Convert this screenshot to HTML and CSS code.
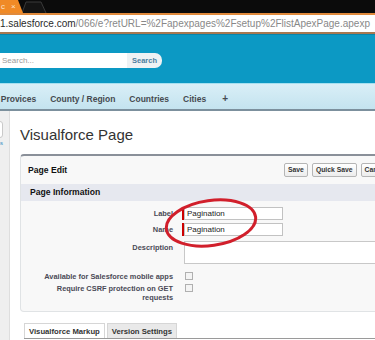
FILE: index.html
```html
<!DOCTYPE html>
<html>
<head>
<meta charset="utf-8">
<link rel="stylesheet" href="styles.css">
</head>
<body>
<div class="page">
  <div class="tabstrip">
    <div class="tab-active"><span class="tab-title">c</span><span class="tab-x">×</span></div>
    <svg class="tab-new" width="26" height="13" viewBox="0 0 26 13"><path d="M1 13 L5 2 H20 L25 13" fill="#141414" stroke="#3a3a3a" stroke-width="1"/></svg>
  </div>
  <div class="urlbar"><span class="host">1.salesforce.com</span><span class="path">/066/e?retURL=%2Fapexpages%2Fsetup%2FlistApexPage.apexp</span></div>
  <header class="sfhead">
    <div class="search">
      <input class="search-input" type="text" placeholder="Search...">
      <button class="search-btn" type="button">Search</button>
    </div>
  </header>
  <nav class="tabbar">
    <span class="navtab">/ Provices</span>
    <span class="navtab">County / Region</span>
    <span class="navtab">Countries</span>
    <span class="navtab">Cities</span>
    <span class="navtab plus">+</span>
  </nav>
  <div class="body">
    <aside class="sidebar">
      <div class="side-inner">
        <div class="sidebox"></div>
        <a class="sidelink">Options</a>
      </div>
    </aside>
    <main class="main">
      <h1 class="title">Visualforce Page</h1>
      <div class="panel">
        <div class="panel-head">
          <h2 class="panel-title">Page Edit</h2>
          <div class="btns">
            <button class="btn" type="button">Save</button>
            <button class="btn" type="button">Quick Save</button>
            <button class="btn" type="button">Cancel</button>
          </div>
        </div>
        <h3 class="section">Page Information</h3>
        <div class="form">
          <label class="lbl">Label</label>
          <div class="data"><span class="req"></span><input class="field" type="text" value="Pagination"></div>
          <label class="lbl">Name</label>
          <div class="data"><span class="req"></span><input class="field" type="text" value="Pagination"></div>
          <label class="lbl lbl-top">Description</label>
          <div class="data"><textarea class="area"></textarea></div>
          <label class="lbl lbl-cb lbl-first">Available for Salesforce mobile apps</label>
          <div class="data data-cb data-first"><span class="cb"></span></div>
          <label class="lbl lbl-cb">Require CSRF protection on GET requests</label>
          <div class="data data-cb"><span class="cb"></span></div>
        </div>
      </div>
      <div class="subtabs">
        <span class="subtab active">Visualforce Markup</span>
        <span class="subtab">Version Settings</span>
      </div>
    </main>
  </div>
</div>
<svg class="annot" width="375" height="340" viewBox="0 0 375 340">
  <ellipse cx="211" cy="223" rx="45" ry="22.5" transform="rotate(-8 211 223)" fill="none" stroke="#d11f2b" stroke-width="3"/>
</svg>
</body>
</html>
```
FILE: styles.css
```css
* { box-sizing: border-box; }
html, body { margin: 0; padding: 0; }
body {
  width: 375px;
  height: 340px;
  overflow: hidden;
  position: relative;
  background: #fff;
  font-family: "Liberation Sans", Arial, sans-serif;
}
.page { width: 430px; }

.tabstrip {
  height: 13px;
  background: #0b0b0b;
  display: flex;
  align-items: flex-end;
}
.tab-active {
  width: 23px;
  height: 13px;
  background: #f08a26;
  clip-path: polygon(0 0, 18px 0, 23px 100%, 0 100%);
  display: flex;
  align-items: center;
  gap: 6px;
  padding-left: 1px;
  font-size: 8px;
  color: #fde4c8;
}
.tab-new { display: block; margin-left: -2px; }

.urlbar {
  height: 21px;
  border-top: 2px solid #e08a3c;
  border-bottom: 2px solid #a87850;
  background: #fff;
  font-size: 10px;
  line-height: 17px;
  white-space: nowrap;
}
.host { color: #2a2a2a; }
.path { color: #888; }

.sfhead {
  height: 50px;
  background: #0c99c4;
  border-top: 1px solid #0a84ab;
  border-bottom: 1px solid #a6e0f0;
  padding-top: 18px;
}
.search { display: flex; margin-left: -6px; }
.search-input {
  width: 133px;
  height: 15px;
  border: 0;
  border-radius: 7px 0 0 7px;
  padding: 0 0 0 8px;
  font-family: inherit;
  font-size: 8px;
  color: #999;
  background: #fff;
}
.search-input::placeholder { color: #9a9a9a; }
.search-btn {
  width: 35px;
  height: 15px;
  border: 0;
  border-radius: 0 7px 7px 0;
  background: #eef2f4;
  font-family: inherit;
  font-size: 7.5px;
  font-weight: bold;
  color: #4a7ea0;
  padding: 0;
}

.tabbar {
  height: 27px;
  background: linear-gradient(#d9eff7, #c4e3ef);
  border-bottom: 2px solid #7c909d;
  display: flex;
  align-items: flex-end;
  gap: 14px;
  padding: 0 0 5px 0;
  margin-left: -4px;
}
.navtab {
  font-size: 8.5px;
  font-weight: bold;
  color: #454a50;
  line-height: 10px;
  white-space: nowrap;
}
.navtab.plus { font-size: 10px; margin-left: 2px; }

.body { display: flex; height: 240px; }
.sidebar {
  width: 10px;
  flex: 0 0 10px;
  background: #efefef;
  border-right: 1px solid #dedede;
  overflow: hidden;
}
.side-inner {
  width: 60px;
  margin-left: -57px;
  padding-top: 10px;
  display: flex;
  flex-direction: column;
  align-items: stretch;
}
.sidebox {
  height: 17px;
  background: #fff;
  border: 1px solid #c9c9c9;
  border-radius: 3px;
}
.sidelink {
  font-size: 6px;
  color: #3b8fc4;
  text-align: right;
  margin-top: 1px;
  line-height: 8px;
}

.main { flex: 1; padding-left: 10px; background: #fff; }
.title {
  margin: 15px 0 10px 0;
  font-size: 15px;
  line-height: 18px;
  font-weight: normal;
  color: #333;
}

.panel {
  width: 400px;
  background: #f8f8f8;
  border: 1px solid #e0e3e5;
  border-top: 2px solid #8a9099;
  border-radius: 4px;
  height: 158px;
}
.panel-head {
  display: flex;
  align-items: center;
  height: 28px;
  padding-left: 7px;
}
.panel-title {
  margin: 0;
  flex: 0 0 256px;
  font-size: 8.6px;
  font-weight: bold;
  color: #111;
}
.btns { display: flex; gap: 4px; }
.btn {
  height: 14px;
  padding: 0 3px;
  border: 1px solid #b5b5b5;
  border-radius: 2px;
  background: linear-gradient(#ffffff, #ececec);
  font-family: inherit;
  font-size: 6.8px;
  font-weight: bold;
  color: #333;
  line-height: 12px;
}

.section {
  margin: 0;
  height: 17px;
  background: #e6e8ef;
  font-size: 8.6px;
  font-weight: bold;
  color: #111;
  line-height: 17px;
  padding-left: 9px;
}

.form {
  display: grid;
  grid-template-columns: 161px 1fr;
  row-gap: 3px;
  padding-top: 6px;
}
.lbl {
  font-size: 7.4px;
  font-weight: bold;
  color: #4a4a56;
  text-align: right;
  line-height: 9px;
  padding: 0 9px 0 18px;
  align-self: center;
}
.lbl-top { align-self: start; padding-top: 4px; }
.data { display: flex; align-items: center; }
.req { width: 2px; height: 13px; background: #c00; }
.field {
  width: 99px;
  height: 13px;
  border: 1px solid #c2c2c2;
  padding: 0 0 0 2px;
  font-family: inherit;
  font-size: 8px;
  color: #222;
  background: #fff;
  margin: 0;
}
.area {
  display: block;
  width: 210px;
  height: 23px;
  margin: 2px 0 0 2px;
  border: 1px solid #c8c8c8;
  background: #fff;
  resize: none;
}
.lbl-cb { align-self: start; }
.data-cb { align-items: flex-start; padding-left: 3px; }
.lbl-first, .data-first { margin-top: 5px; }
.cb {
  width: 8px;
  height: 8px;
  border: 1px solid #b0b0b0;
  background: #f4f4f4;
}

.subtabs {
  display: flex;
  align-items: flex-end;
  gap: 2px;
  margin: 11px 0 0 4px;
  height: 16px;
  border-bottom: 1px solid #9a9a9a;
  width: 400px;
}
.subtab {
  height: 15px;
  padding: 0 4px;
  border: 1px solid #d6d6d6;
  border-bottom: 0;
  font-size: 7.7px;
  font-weight: bold;
  color: #333;
  line-height: 15px;
  background: #e9e9e9;
  white-space: nowrap;
}
.subtab.active { background: #fff; }

.annot {
  position: absolute;
  left: 0;
  top: 0;
  pointer-events: none;
}
```
